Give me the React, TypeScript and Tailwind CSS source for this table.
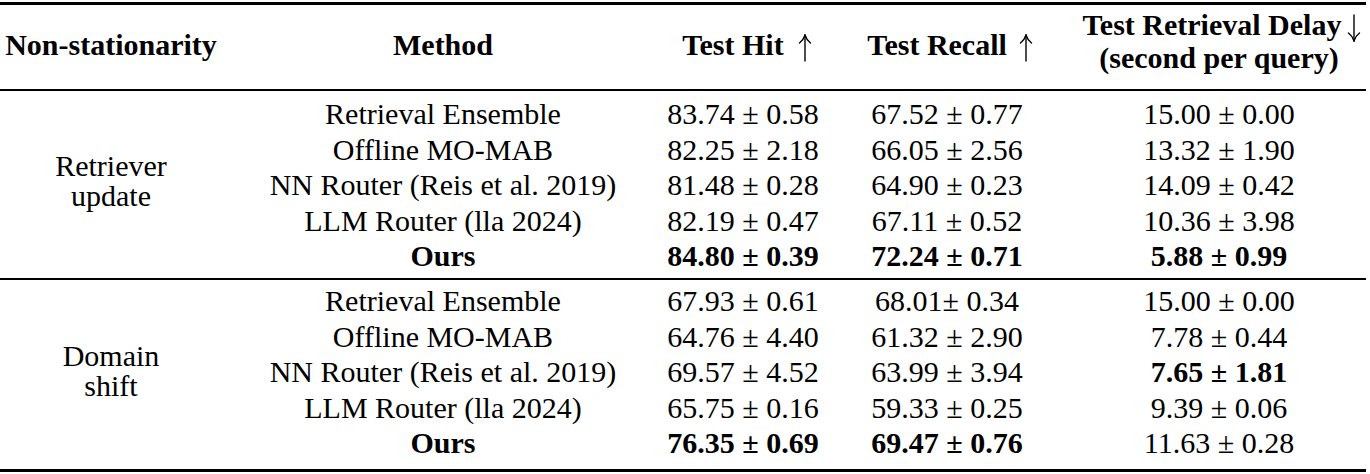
import React from "react";

type Cell = { text: string; bold?: boolean };
type Row = { method: string; bold?: boolean; hit: Cell; recall: Cell; delay: Cell };

const g1: Row[] = [
  { method: "Retrieval Ensemble", hit: { text: "83.74 ± 0.58" }, recall: { text: "67.52 ± 0.77" }, delay: { text: "15.00 ± 0.00" } },
  { method: "Offline MO-MAB", hit: { text: "82.25 ± 2.18" }, recall: { text: "66.05 ± 2.56" }, delay: { text: "13.32 ± 1.90" } },
  { method: "NN Router (Reis et al. 2019)", hit: { text: "81.48 ± 0.28" }, recall: { text: "64.90 ± 0.23" }, delay: { text: "14.09 ± 0.42" } },
  { method: "LLM Router (lla 2024)", hit: { text: "82.19 ± 0.47" }, recall: { text: "67.11 ± 0.52" }, delay: { text: "10.36 ± 3.98" } },
  { method: "Ours", bold: true, hit: { text: "84.80 ± 0.39", bold: true }, recall: { text: "72.24 ± 0.71", bold: true }, delay: { text: "5.88 ± 0.99", bold: true } },
];

const g2: Row[] = [
  { method: "Retrieval Ensemble", hit: { text: "67.93 ± 0.61" }, recall: { text: "68.01± 0.34" }, delay: { text: "15.00 ± 0.00" } },
  { method: "Offline MO-MAB", hit: { text: "64.76 ± 4.40" }, recall: { text: "61.32 ± 2.90" }, delay: { text: "7.78 ± 0.44" } },
  { method: "NN Router (Reis et al. 2019)", hit: { text: "69.57 ± 4.52" }, recall: { text: "63.99 ± 3.94" }, delay: { text: "7.65 ± 1.81", bold: true } },
  { method: "LLM Router (lla 2024)", hit: { text: "65.75 ± 0.16" }, recall: { text: "59.33 ± 0.25" }, delay: { text: "9.39 ± 0.06" } },
  { method: "Ours", bold: true, hit: { text: "76.35 ± 0.69", bold: true }, recall: { text: "69.47 ± 0.76", bold: true }, delay: { text: "11.63 ± 0.28" } },
];

const cols = "grid grid-cols-[222px_442px_158px_250px_294px]";

function Arrow({ down, className }: { down?: boolean; className?: string }) {
  return (
    <svg
      width="14"
      height="28"
      viewBox="0 0 14 28"
      className={`inline-block align-[-7px] ${className ?? ""}`}
      fill="none"
      stroke="black"
      strokeWidth="1.4"
      strokeLinecap="round"
    >
      {down ? (
        <>
          <path d="M7 1 L7 27" />
          <path d="M1.5 19 Q5.5 22 7 27 Q8.5 22 12.5 19" />
        </>
      ) : (
        <>
          <path d="M7 27 L7 1" />
          <path d="M1.5 9 Q5.5 6 7 1 Q8.5 6 12.5 9" />
        </>
      )}
    </svg>
  );
}

function Group({ label, rows, pad, labelPad }: { label: [string, string]; rows: Row[]; pad: string; labelPad: string }) {
  return (
    <div className={`${cols} ${pad}`}>
      <div className={`row-span-5 flex flex-col items-center justify-center leading-[30px] ${labelPad}`}>
        <span>{label[0]}</span>
        <span>{label[1]}</span>
      </div>
      {rows.map((r, i) => (
        <React.Fragment key={i}>
          <div className={`h-[35.5px] leading-[35.5px] text-center whitespace-nowrap ${r.bold ? "font-bold" : ""}`}>{r.method}</div>
          <div className={`h-[35.5px] leading-[35.5px] text-center whitespace-nowrap ${r.hit.bold ? "font-bold" : ""}`}>{r.hit.text}</div>
          <div className={`h-[35.5px] leading-[35.5px] text-center whitespace-nowrap ${r.recall.bold ? "font-bold" : ""}`}>{r.recall.text}</div>
          <div className={`h-[35.5px] leading-[35.5px] text-center whitespace-nowrap ${r.delay.bold ? "font-bold" : ""}`}>{r.delay.text}</div>
        </React.Fragment>
      ))}
    </div>
  );
}

export default function App() {
  return (
    <div className="w-[1370px] h-[474px] bg-white text-black font-['Liberation_Serif','Times_New_Roman',serif] text-[30px]">
      <div className="w-[1366px] pt-[2px]">
        <div className="h-[3px] bg-black" />
        <div className={`${cols} h-[84px] font-bold`}>
          <div className="pt-[23px] leading-[34px] text-center whitespace-nowrap">Non-stationarity</div>
          <div className="pt-[23px] leading-[34px] text-center whitespace-nowrap">Method</div>
          <div className="pt-[23px] leading-[34px] text-center whitespace-nowrap pl-[8px]">
            Test Hit<Arrow className="ml-[14px]" />
          </div>
          <div className="pt-[23px] leading-[34px] text-center whitespace-nowrap pl-[6px]">
            Test Recall<Arrow className="ml-[12px]" />
          </div>
          <div className="pt-[4px] leading-[31px] text-center whitespace-nowrap">
            <div className="pl-[6px]">
              Test Retrieval Delay<Arrow down className="ml-[6px]" />
            </div>
            <div>(second per query)</div>
          </div>
        </div>
        <div className="h-[2px] bg-black" />
        <Group label={["Retriever", "update"]} rows={g1} pad="pt-[5px] pb-[4.5px]" labelPad="pb-[8px]" />
        <div className="h-[2px] bg-black" />
        <Group label={["Domain", "shift"]} rows={g2} pad="pt-[3px] pb-[8.5px]" labelPad="pb-[2px]" />
        <div className="h-[3px] bg-black" />
      </div>
    </div>
  );
}
